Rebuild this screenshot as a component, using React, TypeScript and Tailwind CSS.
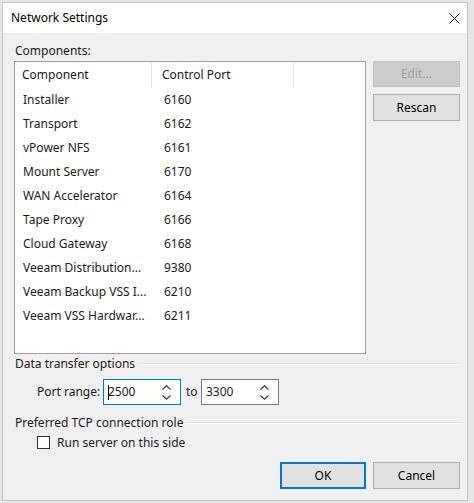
import React from "react";

const rows: [string, string][] = [
  ["Installer", "6160"],
  ["Transport", "6162"],
  ["vPower NFS", "6161"],
  ["Mount Server", "6170"],
  ["WAN Accelerator", "6164"],
  ["Tape Proxy", "6166"],
  ["Cloud Gateway", "6168"],
  ["Veeam Distribution...", "9380"],
  ["Veeam Backup VSS I...", "6210"],
  ["Veeam VSS Hardwar...", "6211"],
];

function Spin({ value, focused }: { value: string; focused?: boolean }) {
  return (
    <div
      className={
        "flex items-center w-[78px] h-[26px] bg-white border " +
        (focused ? "border-[#0078d7]" : "border-[#7a7a7a]")
      }
    >
      <div className="flex-1 pl-[4px] flex items-center">
        {focused && <div className="w-[1px] h-[15px] bg-black -mr-[1px]" />}
        <span>{value}</span>
      </div>
      <div className="w-[22px] flex flex-col items-center gap-[5px] pr-[6px]">
        <svg width="9" height="5" viewBox="0 0 9 5">
          <path d="M0.5 4.5 L4.5 0.8 L8.5 4.5" fill="none" stroke="#333" strokeWidth="1.1" />
        </svg>
        <svg width="9" height="5" viewBox="0 0 9 5">
          <path d="M0.5 0.5 L4.5 4.2 L8.5 0.5" fill="none" stroke="#333" strokeWidth="1.1" />
        </svg>
      </div>
    </div>
  );
}

export default function App() {
  return (
    <div
      className="w-[474px] h-[503px] bg-[#e6e6e6] text-[12px] text-[#1a1a1a] overflow-hidden"
      style={{ fontFamily: '"Noto Sans", "Liberation Sans", sans-serif' }}
    >
      <div className="ml-[2px] mt-[2px] w-[466px] h-[499px] border border-[#c4c4c4] bg-[#f0f0f0] flex flex-col">
        {/* Title bar */}
        <div className="h-[30px] bg-white flex items-center justify-between pl-[8px] pr-[7px] shrink-0">
          <span className="text-[12px] text-black leading-none">Network Settings</span>
          <svg width="11" height="11" viewBox="0 0 11 11">
            <path d="M0.5 0.5 L10.5 10.5 M10.5 0.5 L0.5 10.5" stroke="#111" strokeWidth="1" />
          </svg>
        </div>

        <div className="flex flex-col pl-[11px] pr-[7px]">
          <div className="mt-[9px] h-[17px] leading-[17px] pl-[1px]">Components:</div>
          <div className="flex gap-[7px] mt-[2px]">
            <div className="w-[352px] h-[293px] bg-white border border-[#a0a0a0]">
              <div className="flex h-[26px] items-center">
                <div className="w-[137px] h-full flex items-center pl-[7px] border-r border-[#e5e5e5]">
                  Component
                </div>
                <div className="w-[142px] h-full flex items-center pl-[10px] border-r border-[#e5e5e5]">
                  Control Port
                </div>
              </div>
              {rows.map(([name, port]) => (
                <div key={name} className="flex h-[24px] items-center">
                  <div className="w-[149px] pl-[8px] whitespace-nowrap">{name}</div>
                  <div>{port}</div>
                </div>
              ))}
            </div>
            <div className="flex flex-col gap-[7px] w-[87px]">
              <div className="h-[26px] bg-[#cccccc] border border-[#bfbfbf] flex items-center justify-center text-[#a0a0a0]">
                Edit...
              </div>
              <div className="h-[27px] bg-[#e1e1e1] border border-[#adadad] flex items-center justify-center text-black">
                Rescan
              </div>
            </div>
          </div>

          <div className="flex items-center mt-[1px] h-[17px]">
            <span className="pl-[1px] whitespace-nowrap">Data transfer options</span>
            <div className="flex-1 ml-[4px] h-[2px] border-t border-[#dcdcdc] border-b border-b-white" />
          </div>

          <div className="flex items-center mt-[7px] pl-[23px]">
            <span className="w-[66px] whitespace-nowrap">Port range:</span>
            <Spin value="2500" focused />
            <span className="ml-[5px] w-[15px]">to</span>
            <Spin value="3300" />
          </div>

          <div className="flex items-center mt-[9px] h-[17px]">
            <span className="pl-[1px] whitespace-nowrap">Preferred TCP connection role</span>
            <div className="flex-1 ml-[4px] h-[2px] border-t border-[#dcdcdc] border-b border-b-white" />
          </div>

          <div className="flex items-center mt-[4px] pl-[23px] h-[15px]">
            <div className="w-[13px] h-[13px] border border-[#333] bg-white" />
            <span className="ml-[7px]">Run server on this side</span>
          </div>

          <div className="flex justify-end gap-[7px] mt-[12px]">
            <div className="w-[86px] h-[27px] bg-[#e1e1e1] border-2 border-[#0078d7] flex items-center justify-center text-black">
              OK
            </div>
            <div className="w-[87px] h-[27px] bg-[#e1e1e1] border border-[#adadad] flex items-center justify-center text-black">
              Cancel
            </div>
          </div>
        </div>
      </div>
    </div>
  );
}
